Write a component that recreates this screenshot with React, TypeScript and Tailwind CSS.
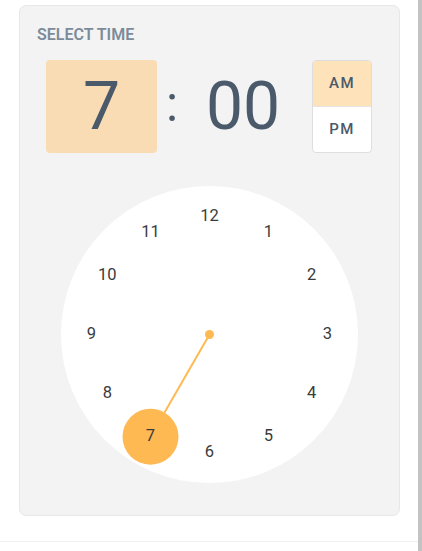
import React from "react";

const numbers = [12, 1, 2, 3, 4, 5, 6, 7, 8, 9, 10, 11];

export default function App() {
  const selected = 7;
  const size = 297;
  const c = size / 2;
  const r = 118;
  const angle = (selected % 12) * 30 * (Math.PI / 180);
  const hx = c + r * Math.sin(angle);
  const hy = c - r * Math.cos(angle);
  // hand stops at the edge of the selected bubble
  const ex = hx + (c - hx) * (28 / r);
  const ey = hy + (c - hy) * (28 / r);

  return (
    <div
      className="flex h-[551px] w-full bg-white"
      style={{ fontFamily: "Roboto, 'Noto Sans', sans-serif" }}
    >
      <div className="flex flex-1 flex-col">
        {/* time picker card */}
        <div className="ml-[19px] mt-[5px] h-[511px] w-[381px] rounded-[7px] border border-[#e7e7e7] bg-[#f3f3f3]">
          <div className="pl-[17px] pt-[18px] text-[16px] font-semibold leading-[22px] text-[#7c8b9a]">
            SELECT TIME
          </div>

          <div className="mt-[14px] flex h-[93px] items-stretch pl-[26px] pr-[27px]">
            <div className="flex w-[111px] items-center justify-center rounded-[4px] bg-[#f9dcb4] text-[66px] font-normal leading-none text-[#4a5a6b]">
              7
            </div>
            <div className="flex w-[30px] items-center justify-center pb-[6px] text-[50px] leading-none text-[#4a5a6b]">
              :
            </div>
            <div className="ml-[16px] flex w-[80px] items-center justify-center text-[66px] font-normal leading-none text-[#4a5a6b]">
              00
            </div>
            <div className="flex-1" />
            <div className="flex w-[60px] flex-col overflow-hidden rounded-[4px] border border-[#dedede] bg-white text-[15px] font-medium tracking-[1.5px] text-[#4a5a6b]">
              <div className="flex flex-1 items-center justify-center bg-[#fee3ba]">AM</div>
              <div className="h-px bg-[#e4e4e4]" />
              <div className="flex flex-1 items-center justify-center">PM</div>
            </div>
          </div>

          {/* clock face */}
          <div className="mt-[33px] flex justify-center">
            <div className="relative h-[297px] w-[297px] rounded-full bg-white">
              <svg className="absolute inset-0" width={size} height={size}>
                <circle cx={hx} cy={hy} r={28} fill="#ffb952" />
                <line x1={c} y1={c} x2={ex} y2={ey} stroke="#ffb952" strokeWidth={2} />
                <circle cx={c} cy={c} r={4.5} fill="#ffb952" />
              </svg>
              {numbers.map((n) => {
                const a = (n % 12) * 30 * (Math.PI / 180);
                const x = c + r * Math.sin(a);
                const y = c - r * Math.cos(a);
                return (
                  <span
                    key={n}
                    className="absolute flex h-[24px] w-[30px] -translate-x-1/2 -translate-y-1/2 items-center justify-center text-[16.5px] leading-none text-[#3b3b3b]"
                    style={{ left: x, top: y }}
                  >
                    {n}
                  </span>
                );
              })}
            </div>
          </div>
        </div>
        <div className="flex-1" />
        <div className="mb-[9px] h-px bg-[#f0f0f0]" />
      </div>
      <div className="w-[4px] bg-[#c3c3c3]" />
    </div>
  );
}
